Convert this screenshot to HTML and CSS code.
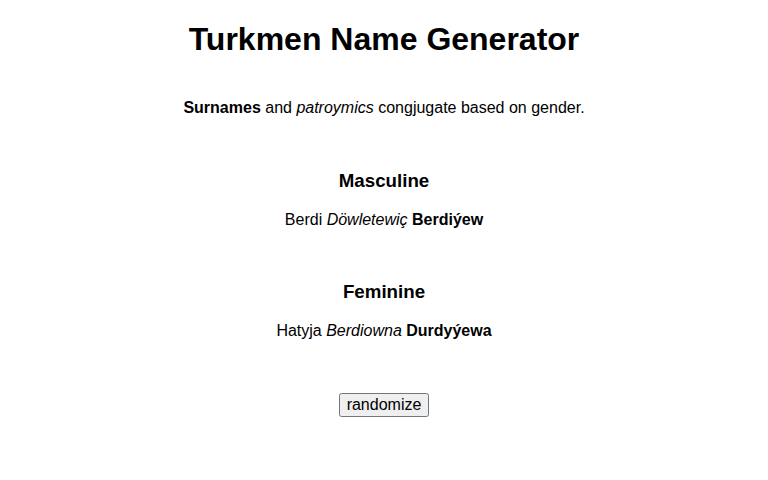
FILE: index.html
```html
<!DOCTYPE html>
<html lang="tk">
<head>
  <meta charset="UTF-8" />
  <title>Turkmen Name Generator</title>
  <link rel="stylesheet" href="styles.css">
</head>
<body>
  <h1>Turkmen Name Generator</h1>

  <p class="intro"><strong>Surnames</strong> and <em>patroymics</em> congjugate based on gender.</p>

  <div class="block">
    <h3>Masculine</h3>
    <p id="male">Berdi <em>Döwletewiç</em> <strong>Berdiýew</strong></p>
  </div>

  <div class="block">
    <h3>Feminine</h3>
    <p id="female">Hatyja <em>Berdiowna</em> <strong>Durdyýewa</strong></p>
  </div>

  <div class="controls">
    <button onclick="randomize()">randomize</button>
  </div>

  <script>
    const maleNames = ['Berdi', 'Döwlet', 'Durdy', 'Myrat', 'Atamyrat', 'Serdar', 'Merdan', 'Batyr'];
    const femaleNames = ['Hatyja', 'Aýgül', 'Jeren', 'Maral', 'Ogulgerek', 'Bahar', 'Aýna', 'Gülnara'];

    const pick = list => list[Math.floor(Math.random() * list.length)];

    function randomize() {
      const mFather = pick(maleNames), mGrand = pick(maleNames);
      const fFather = pick(maleNames), fGrand = pick(maleNames);
      document.getElementById('male').innerHTML =
        `${pick(maleNames)} <em>${mFather}ewiç</em> <strong>${mGrand}ýew</strong>`;
      document.getElementById('female').innerHTML =
        `${pick(femaleNames)} <em>${fFather}owna</em> <strong>${fGrand}ýewa</strong>`;
    }
  </script>
</body>
</html>
```

FILE: styles.css
```css
body {
  font-family: "Liberation Sans", Arial, sans-serif;
  font-size: 16px;
  color: #000;
  background: #fff;
  text-align: center;
  margin: 8px;
}
h1 {
  font-size: 32px;
  margin: 13px 0 0;
}
.intro {
  margin: 41px 0 17px;
}
.block {
  padding-top: 17px;
}
h3 {
  font-size: 18.72px;
  margin: 19px 0;
}
.block p {
  margin: 16px 0;
}
.controls {
  padding-top: 37px;
}
button {
  font-family: "Liberation Sans", Arial, sans-serif;
  font-size: 16px;
}
```
